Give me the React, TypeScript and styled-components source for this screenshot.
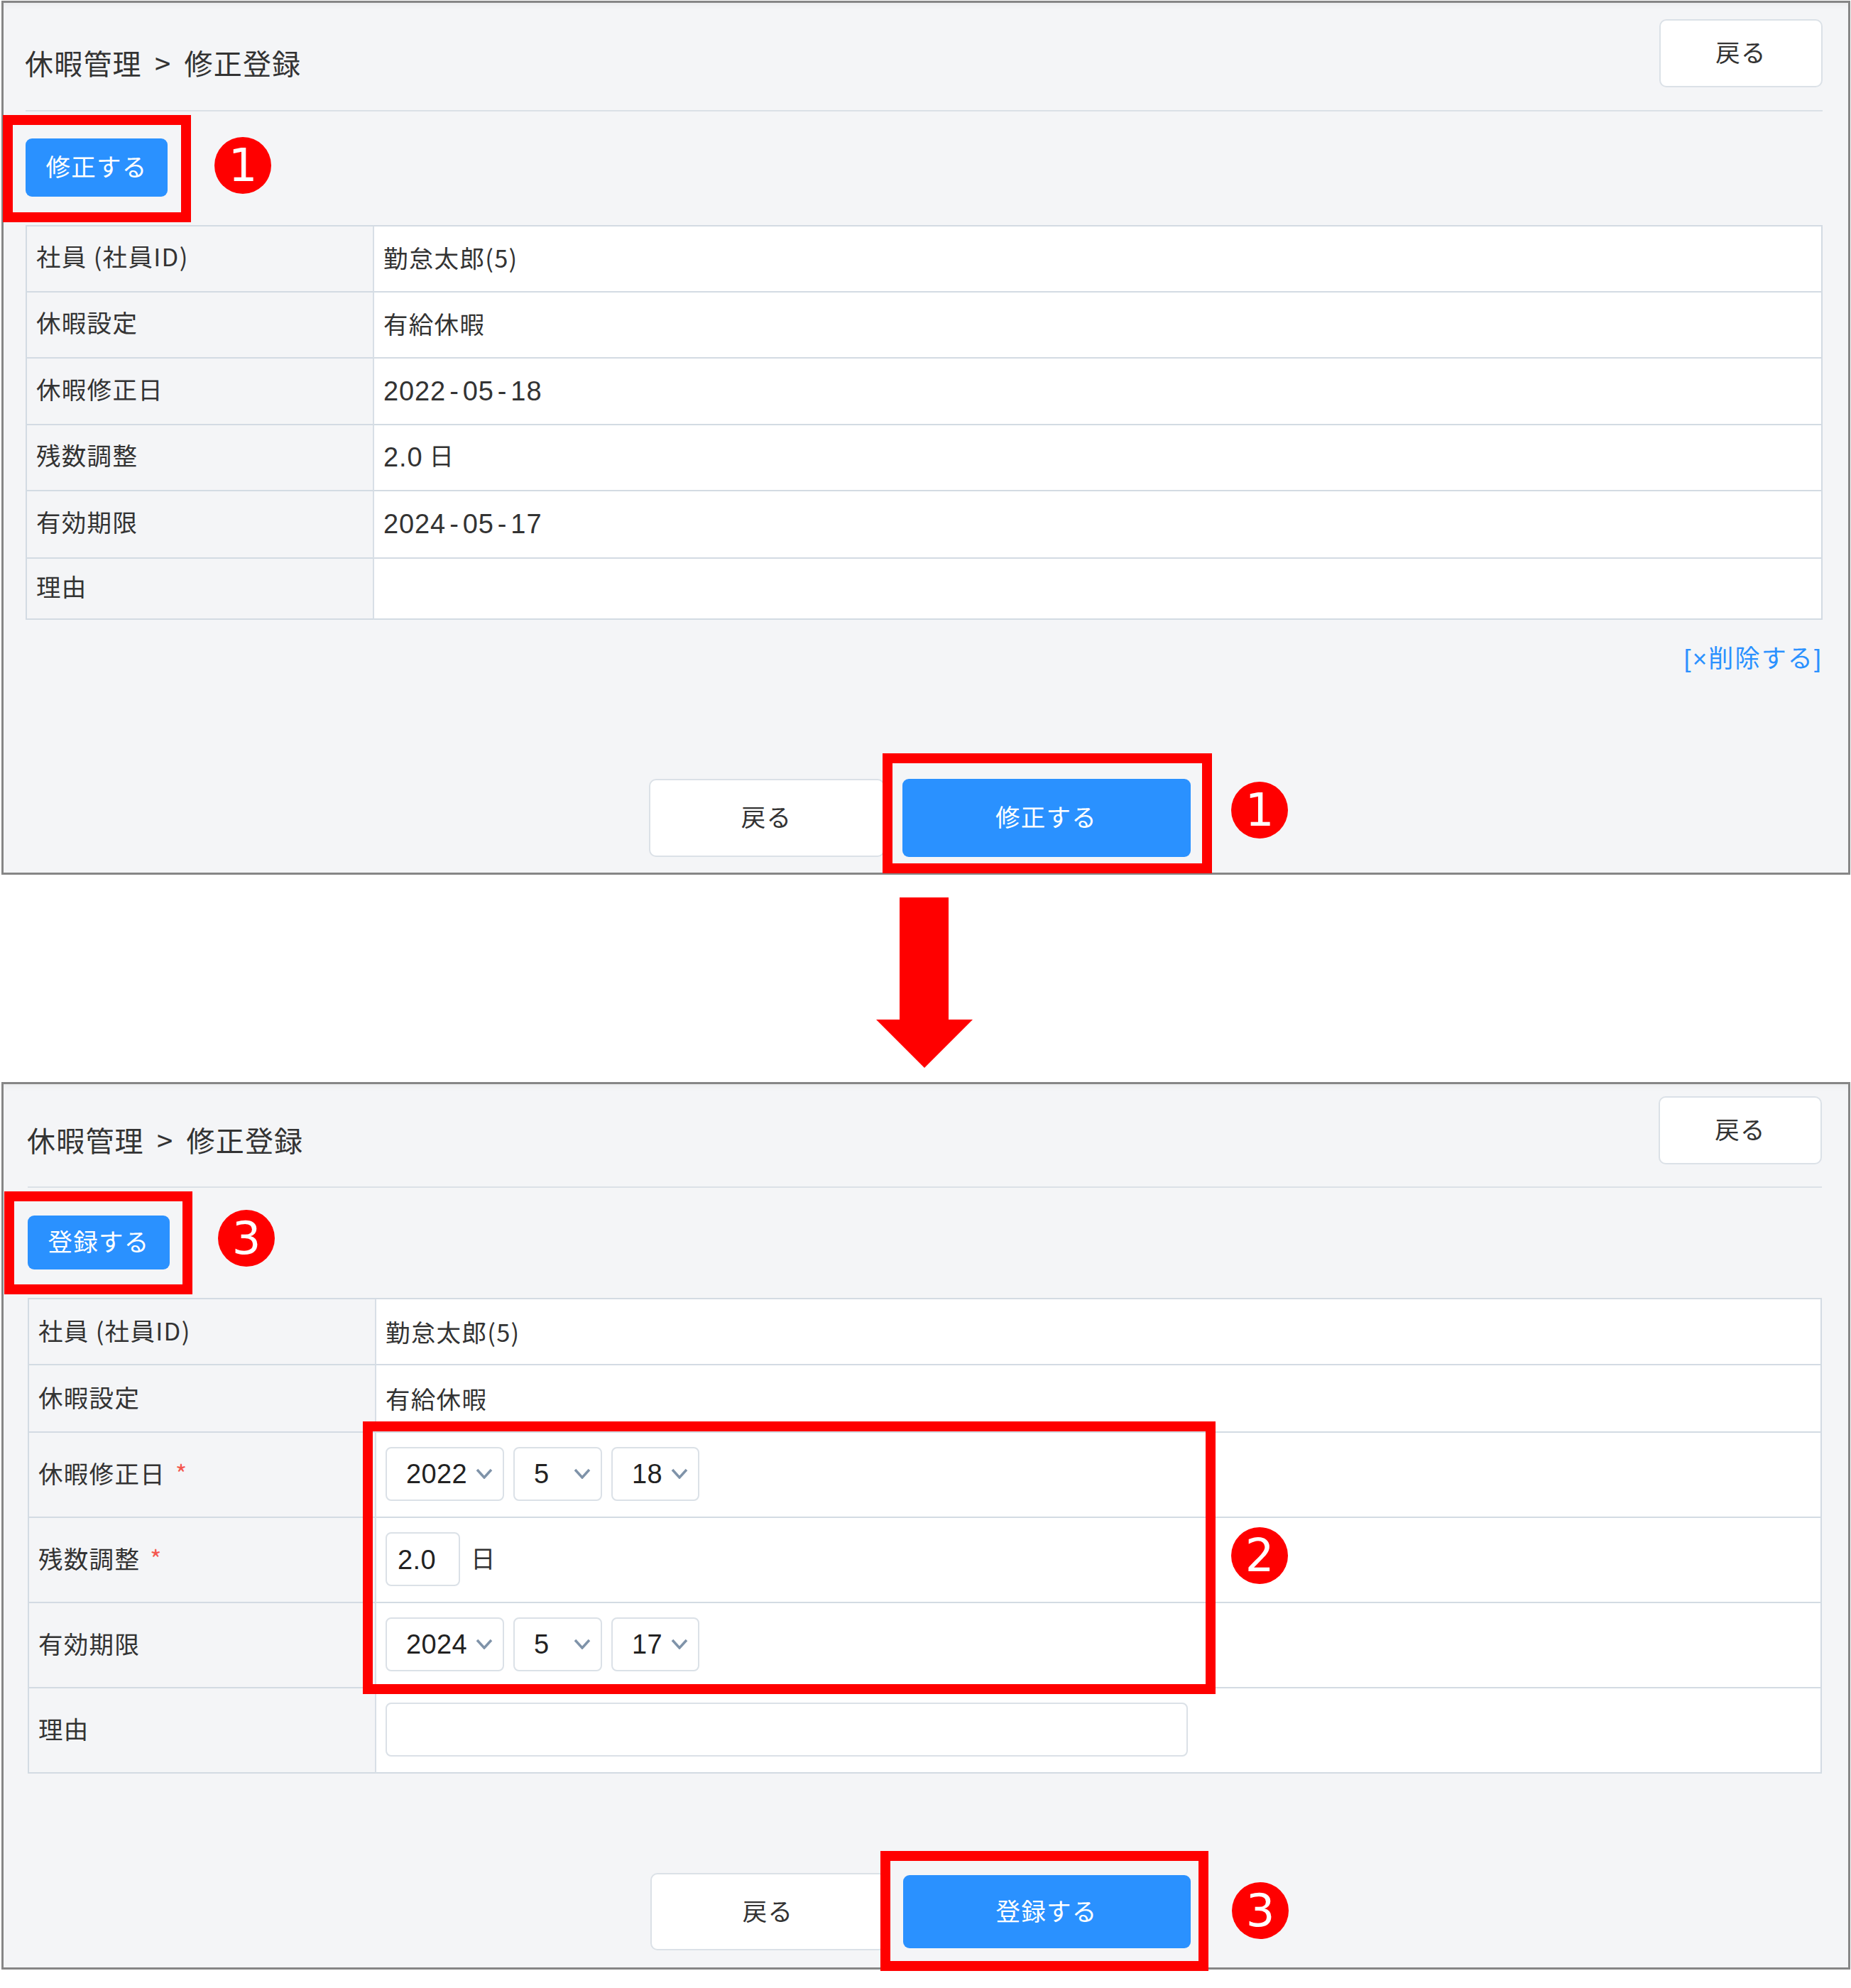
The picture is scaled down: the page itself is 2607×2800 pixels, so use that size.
import React from 'react';
import styled, { createGlobalStyle } from 'styled-components';

const GlobalStyle = createGlobalStyle`
  html, body {
    margin: 0;
    padding: 0;
    background: #fff;
  }
  * {
    box-sizing: border-box;
  }
  body {
    width: 2607px;
    height: 2800px;
    overflow: hidden;
    font-family: "Noto Sans CJK JP", "Noto Sans", sans-serif;
    color: #333;
  }
`;

const Page = styled.div`
  width: 2607px;
  padding-top: 1px;
`;

const Panel = styled.section<{ $left: number; $right: number; $bottom: number }>`
  position: relative;
  margin-left: 2px;
  width: 2604px;
  padding: 0 ${(p) => p.$right}px ${(p) => p.$bottom}px ${(p) => p.$left}px;
  border: 3px solid #868686;
  background: #f4f5f7;
  box-shadow: inset 0 10px 10px -8px rgba(0, 0, 0, 0.05);
`;

const Header = styled.header<{ $top: number; $bottom: number }>`
  display: flex;
  justify-content: space-between;
  align-items: flex-start;
  padding: ${(p) => p.$top}px 0 ${(p) => p.$bottom}px;
  border-bottom: 2px solid #dbe1e7;
`;

const Title = styled.h1<{ $top: number }>`
  margin: ${(p) => p.$top}px 0 0 -1px;
  font-size: 40px;
  font-weight: 400;
  line-height: 50px;
  letter-spacing: 1.2px;
  word-spacing: 8px;
  color: #333;
`;

const OutlineButton = styled.button<{ $width: number; $height: number }>`
  width: ${(p) => p.$width}px;
  height: ${(p) => p.$height}px;
  padding: 0 0 6px;
  border: 2px solid #dbe1e7;
  border-radius: 10px;
  background: #fff;
  font-family: inherit;
  font-size: 34.5px;
  letter-spacing: 1.3px;
  color: #333;
`;

const PrimaryButton = styled.button<{ $width: number; $height: number }>`
  width: ${(p) => p.$width}px;
  height: ${(p) => p.$height}px;
  padding: 0 0 6px;
  border: 0;
  border-radius: 9px;
  background: #2a91ff;
  font-family: inherit;
  font-size: 34.5px;
  letter-spacing: 1.3px;
  color: #fff;
`;

const Toolbar = styled.div<{ $top: number; $bottom: number }>`
  display: flex;
  padding: ${(p) => p.$top}px 0 ${(p) => p.$bottom}px;
`;

const Table = styled.table<{ $lift: number }>`
  width: 100%;
  table-layout: fixed;
  border-collapse: separate;
  border-spacing: 0;
  border-top: 2px solid #d3dbe3;
  border-left: 2px solid #d3dbe3;
  background: #fff;

  th {
    padding-bottom: ${(p) => p.$lift + 4}px;
  }
  td {
    padding-bottom: ${(p) => p.$lift}px;
  }
`;

const LabelCell = styled.th<{ $height: number }>`
  width: 489px;
  height: ${(p) => p.$height}px;
  padding: 0 0 0 13px;
  border-right: 2px solid #d8dfe6;
  border-bottom: 2px solid #d3dbe3;
  background: #f4f5f7;
  font-size: 34.5px;
  font-weight: 400;
  letter-spacing: 1.3px;
  line-height: 44px;
  text-align: left;
  color: #333;
`;

const ValueCell = styled.td`
  padding: 0 0 0 13px;
  border-right: 2px solid #d3dbe3;
  border-bottom: 2px solid #d3dbe3;
  font-size: 34.5px;
  letter-spacing: 1.3px;
  line-height: 44px;
  color: #333;
`;

const Digits = styled.span`
  font-family: "Liberation Sans", sans-serif;
  font-size: 38px;
  letter-spacing: 0.9px;
  vertical-align: -2px;
`;

const Dash = styled.span`
  margin: 0 5px;
`;

const Required = styled.span`
  margin-left: 14px;
  color: #f4574f;
`;

const FieldRow = styled.div`
  display: flex;
  align-items: center;
  gap: 13px;
`;

const SelectBox = styled.div<{ $width: number }>`
  display: flex;
  justify-content: space-between;
  align-items: center;
  width: ${(p) => p.$width}px;
  height: 76px;
  padding: 0 14px 0 27px;
  border: 2px solid #dbe1e7;
  border-radius: 8px;
  background: #fff;
  font-family: "Liberation Sans", sans-serif;
  font-size: 38px;
  letter-spacing: 0.4px;
  color: #222;
`;

const Chevron = styled.svg`
  width: 24px;
  height: 15px;
  margin-top: -1px;
  fill: none;
  stroke: #7f93a9;
  stroke-width: 3.5;
`;

const TextBox = styled.div<{ $width: number }>`
  width: ${(p) => p.$width}px;
  height: 76px;
  padding: 0 15px;
  border: 2px solid #dbe1e7;
  border-radius: 8px;
  background: #fff;
  font-family: "Liberation Sans", sans-serif;
  font-size: 38px;
  letter-spacing: 0.4px;
  line-height: 74px;
  color: #222;
`;

const Unit = styled.span`
  margin: -6px 0 0 2px;
`;

const DeleteRow = styled.div`
  margin-top: 30px;
  font-family: "Liberation Sans", "Noto Sans CJK JP", sans-serif;
  font-size: 35px;
  letter-spacing: 2.2px;
  line-height: 50px;
  text-align: right;
  color: #2a91ff;
`;

const Footer = styled.footer<{ $top: number; $gap: number }>`
  display: flex;
  justify-content: center;
  align-items: center;
  gap: ${(p) => p.$gap}px;
  margin-top: ${(p) => p.$top}px;
  padding-right: 13px;
`;

const ArrowRow = styled.div`
  display: flex;
  justify-content: center;
  height: 292px;
  padding: 32px 4px 0 0;
`;

const RedBox = styled.div<{ $x: number; $y: number; $w: number; $h: number }>`
  position: absolute;
  left: ${(p) => p.$x}px;
  top: ${(p) => p.$y}px;
  width: ${(p) => p.$w}px;
  height: ${(p) => p.$h}px;
  border: 14px solid #ff0000;
`;

const StepBadge = styled.div<{ $x: number; $y: number }>`
  position: absolute;
  left: ${(p) => p.$x}px;
  top: ${(p) => p.$y}px;
  width: 80px;
  height: 80px;
  border-radius: 50%;
  background: #ff0000;
  font-family: "DejaVu Sans", sans-serif;
  font-size: 64px;
  line-height: 80px;
  text-align: center;
  color: #fff;
`;

const DownChevron = () => (
  <Chevron viewBox="0 0 24 15">
    <path d="M2 2l10 11L22 2" />
  </Chevron>
);

const Select = ({ value, width }: { value: string; width: number }) => (
  <SelectBox $width={width}>
    {value}
    <DownChevron />
  </SelectBox>
);

const DateSelects = ({ year, month, day }: { year: string; month: string; day: string }) => (
  <FieldRow>
    <Select value={year} width={167} />
    <Select value={month} width={125} />
    <Select value={day} width={124} />
  </FieldRow>
);

const DateText = ({ year, month, day }: { year: string; month: string; day: string }) => (
  <Digits>
    {year}
    <Dash>-</Dash>
    {month}
    <Dash>-</Dash>
    {day}
  </Digits>
);

const App: React.FC = () => (
  <Page>
    <GlobalStyle />

    <Panel $left={31} $right={36} $bottom={22}>
      <Header $top={23} $bottom={32}>
        <Title $top={36}>休暇管理 &gt; 修正登録</Title>
        <OutlineButton $width={230} $height={96}>戻る</OutlineButton>
      </Header>
      <Toolbar $top={38} $bottom={40}>
        <PrimaryButton $width={200} $height={82}>修正する</PrimaryButton>
      </Toolbar>
      <Table $lift={5}>
        <tbody>
          <tr>
            <LabelCell $height={93}>社員 (社員ID)</LabelCell>
            <ValueCell>勤怠太郎(5)</ValueCell>
          </tr>
          <tr>
            <LabelCell $height={93}>休暇設定</LabelCell>
            <ValueCell>有給休暇</ValueCell>
          </tr>
          <tr>
            <LabelCell $height={94}>休暇修正日</LabelCell>
            <ValueCell><DateText year="2022" month="05" day="18" /></ValueCell>
          </tr>
          <tr>
            <LabelCell $height={93}>残数調整</LabelCell>
            <ValueCell><Digits>2.0</Digits> 日</ValueCell>
          </tr>
          <tr>
            <LabelCell $height={95}>有効期限</LabelCell>
            <ValueCell><DateText year="2024" month="05" day="17" /></ValueCell>
          </tr>
          <tr>
            <LabelCell $height={86}>理由</LabelCell>
            <ValueCell />
          </tr>
        </tbody>
      </Table>
      <DeleteRow>[×削除する]</DeleteRow>
      <Footer $top={144} $gap={25}>
        <OutlineButton $width={332} $height={110}>戻る</OutlineButton>
        <PrimaryButton $width={406} $height={110}>修正する</PrimaryButton>
      </Footer>
      <RedBox $x={-1} $y={158} $w={265} $h={151} />
      <StepBadge $x={297} $y={189}>1</StepBadge>
      <RedBox $x={1238} $y={1057} $w={464} $h={169} />
      <StepBadge $x={1729} $y={1097}>1</StepBadge>
    </Panel>

    <ArrowRow>
      <svg width="136" height="240" viewBox="0 0 136 240">
        <path fill="#ff0000" d="M33 0h69v172h34L68 240 0 172h33z" />
      </svg>
    </ArrowRow>

    <Panel $left={34} $right={37} $bottom={24}>
      <Header $top={17} $bottom={31}>
        <Title $top={36}>休暇管理 &gt; 修正登録</Title>
        <OutlineButton $width={230} $height={96}>戻る</OutlineButton>
      </Header>
      <Toolbar $top={39} $bottom={40}>
        <PrimaryButton $width={200} $height={76}>登録する</PrimaryButton>
      </Toolbar>
      <Table $lift={2}>
        <tbody>
          <tr>
            <LabelCell $height={93}>社員 (社員ID)</LabelCell>
            <ValueCell>勤怠太郎(5)</ValueCell>
          </tr>
          <tr>
            <LabelCell $height={95}>休暇設定</LabelCell>
            <ValueCell>有給休暇</ValueCell>
          </tr>
          <tr>
            <LabelCell $height={120}>休暇修正日<Required>*</Required></LabelCell>
            <ValueCell><DateSelects year="2022" month="5" day="18" /></ValueCell>
          </tr>
          <tr>
            <LabelCell $height={120}>残数調整<Required>*</Required></LabelCell>
            <ValueCell>
              <FieldRow>
                <TextBox $width={105}>2.0</TextBox>
                <Unit>日</Unit>
              </FieldRow>
            </ValueCell>
          </tr>
          <tr>
            <LabelCell $height={120}>有効期限</LabelCell>
            <ValueCell><DateSelects year="2024" month="5" day="17" /></ValueCell>
          </tr>
          <tr>
            <LabelCell $height={120}>理由</LabelCell>
            <ValueCell><TextBox $width={1130} /></ValueCell>
          </tr>
        </tbody>
      </Table>
      <Footer $top={140} $gap={24}>
        <OutlineButton $width={332} $height={109}>戻る</OutlineButton>
        <PrimaryButton $width={405} $height={103}>登録する</PrimaryButton>
      </Footer>
      <RedBox $x={1} $y={151} $w={265} $h={145} />
      <StepBadge $x={302} $y={177}>3</StepBadge>
      <RedBox $x={506} $y={475} $w={1201} $h={384} />
      <StepBadge $x={1729} $y={624}>2</StepBadge>
      <RedBox $x={1235} $y={1080} $w={462} $h={169} />
      <StepBadge $x={1730} $y={1124}>3</StepBadge>
    </Panel>
  </Page>
);

export default App;
